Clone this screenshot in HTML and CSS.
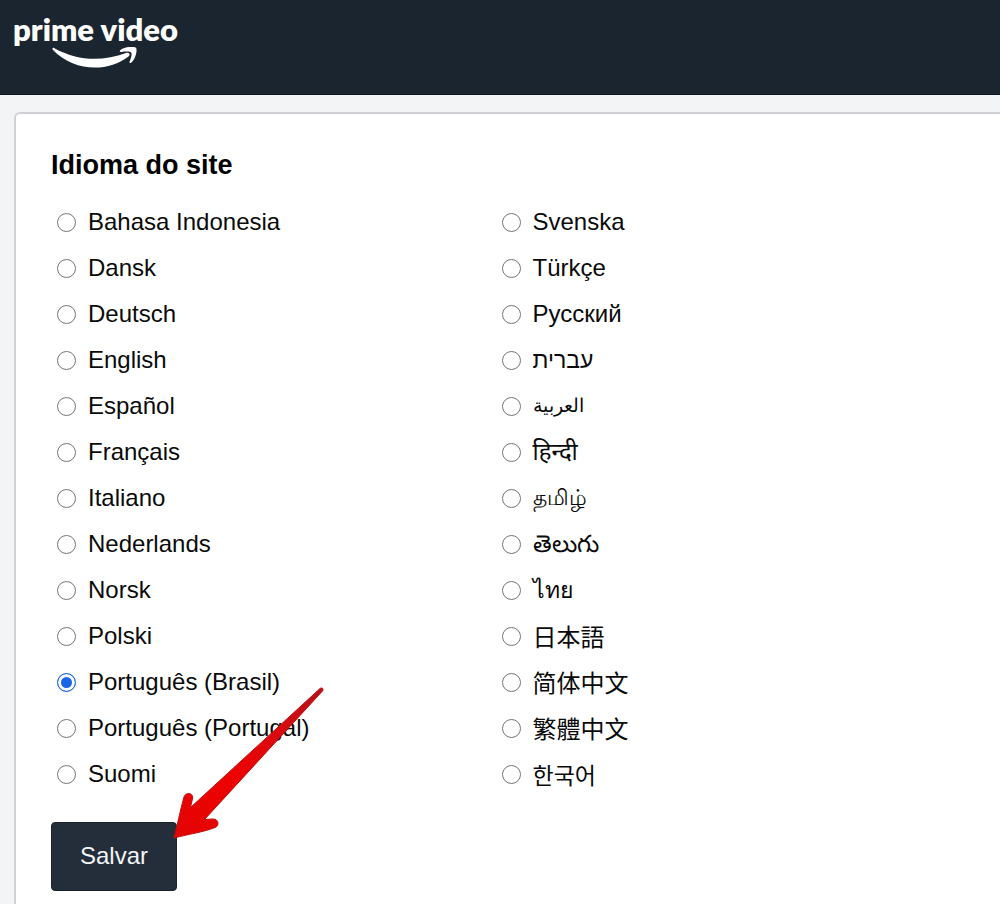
FILE: index.html
```
<!DOCTYPE html>
<html lang="pt-BR">
<head>
<meta charset="utf-8">
<meta name="viewport" content="width=device-width, initial-scale=1">
<title>Prime Video – Idioma do site</title>
<link rel="stylesheet" href="styles.css">
</head>
<body>
<header class="topbar">
  <a class="logo" href="#">
    <span class="logo-text">prime video</span>
    <svg class="logo-smile" viewBox="0 0 86 22" aria-hidden="true">
      <path d="M2 1C26 14.500 51 14.500 74 6C77 5 79 7.500 76.500 9.500C56 25.500 22 25 1 3C0 2 .6 .4 2 1Z"/>
      <path d="M68.500 3C72.500 -.4 82 -.8 84 .8C85.600 3 83.500 12 79.500 15.500C78.300 16.500 77 16 77.600 14.500C79.200 11 80.200 7 79.200 5.600C78 4.200 73 4.500 69.400 5C67.600 5.200 67.200 4.200 68.500 3Z"/>
    </svg>
  </a>
</header>
<main class="page">
  <form class="card">
    <fieldset class="languages">
      <legend class="title">Idioma do site</legend>
      <div class="columns">
        <div class="column">
          <label class="option"><input class="radio" type="radio" name="lang">Bahasa Indonesia</label>
          <label class="option"><input class="radio" type="radio" name="lang">Dansk</label>
          <label class="option"><input class="radio" type="radio" name="lang">Deutsch</label>
          <label class="option"><input class="radio" type="radio" name="lang">English</label>
          <label class="option"><input class="radio" type="radio" name="lang">Español</label>
          <label class="option"><input class="radio" type="radio" name="lang">Français</label>
          <label class="option"><input class="radio" type="radio" name="lang">Italiano</label>
          <label class="option"><input class="radio" type="radio" name="lang">Nederlands</label>
          <label class="option"><input class="radio" type="radio" name="lang">Norsk</label>
          <label class="option"><input class="radio" type="radio" name="lang">Polski</label>
          <label class="option"><input class="radio" type="radio" name="lang" checked>Português (Brasil)</label>
          <label class="option"><input class="radio" type="radio" name="lang">Português (Portugal)</label>
          <label class="option"><input class="radio" type="radio" name="lang">Suomi</label>
        </div>
        <div class="column">
          <label class="option"><input class="radio" type="radio" name="lang">Svenska</label>
          <label class="option"><input class="radio" type="radio" name="lang">Türkçe</label>
          <label class="option"><input class="radio" type="radio" name="lang">Русский</label>
          <label class="option"><input class="radio" type="radio" name="lang"><span class="hebrew" lang="he">עברית</span></label>
          <label class="option"><input class="radio" type="radio" name="lang"><span class="arabic" lang="ar">العربية</span></label>
          <label class="option"><input class="radio" type="radio" name="lang"><span lang="hi">हिन्दी</span></label>
          <label class="option"><input class="radio" type="radio" name="lang"><span class="tamil" lang="ta">தமிழ்</span></label>
          <label class="option"><input class="radio" type="radio" name="lang"><span lang="te">తెలుగు</span></label>
          <label class="option"><input class="radio" type="radio" name="lang"><span class="thai" lang="th">ไทย</span></label>
          <label class="option"><input class="radio" type="radio" name="lang"><span class="japanese" lang="ja">日本語</span></label>
          <label class="option"><input class="radio" type="radio" name="lang"><span class="simplified" lang="zh-Hans">简体中文</span></label>
          <label class="option"><input class="radio" type="radio" name="lang"><span class="traditional" lang="zh-Hant">繁體中文</span></label>
          <label class="option"><input class="radio" type="radio" name="lang"><span class="korean" lang="ko">한국어</span></label>
        </div>
      </div>
    </fieldset>
    <div class="actions">
      <button class="save" type="button">Salvar</button>
      <svg class="arrow" viewBox="0 0 160 160" aria-hidden="true">
        <defs>
          <linearGradient id="arrow-fill" x1="1" y1="0" x2="0" y2="1">
            <stop offset="0" stop-color="#b5121b"/>
            <stop offset=".3" stop-color="#d90b10"/>
            <stop offset=".6" stop-color="#ee0000"/>
            <stop offset="1" stop-color="#e30505"/>
          </linearGradient>
        </defs>
        <path d="M150 4.500C152 3 154 5 152.500 7L34.500 135.500L43 135C49 135 49.500 142 45 143.500C34 148 19 150 4 154C7 143 10 127 14 113C15.500 108 23 108.500 22.700 114L20.500 123.500Z" fill="url(#arrow-fill)" stroke="#c20d0d" stroke-width="1"/>
      </svg>
    </div>
  </form>
</main>
</body>
</html>
```
FILE: styles.css
```
* {
  box-sizing: border-box;
}

body {
  margin: 0;
  min-height: 100vh;
  background: #f3f4f6;
  color: #0a0a0a;
  font-family: "Liberation Sans", Arial, "Noto Sans", sans-serif;
  font-size: 24px;
  overflow-x: hidden;
}

.topbar {
  display: flex;
  height: 95px;
  padding: 11px 13px;
  background: #1b2530;
  border-bottom: 1px solid #10161e;
}

.logo {
  display: flex;
  flex-direction: column;
  align-items: center;
  align-self: flex-start;
  color: #fff;
  text-decoration: none;
}

.logo-text {
  font-family: Lato, "Open Sans", sans-serif;
  font-size: 31px;
  font-weight: 800;
  line-height: 36px;
}

.logo-smile {
  display: block;
  width: 86px;
  height: 22px;
  fill: currentColor;
}

.page {
  padding: 17px 0 0 14px;
}

.card {
  padding: 35px 60px 20px 35px;
  background: #fff;
  border: 2px solid #cfd1d5;
  border-right: 0;
  border-bottom: 0;
  border-radius: 6px 0 0 0;
}

.languages {
  min-width: 0;
  margin: 0;
  padding: 0;
  border: 0;
}

.title {
  padding: 0;
  color: #000;
  font-size: 27px;
  font-weight: 700;
  line-height: 32px;
}

.columns {
  display: grid;
  grid-template-columns: repeat(2, minmax(0, 1fr));
  padding-top: 18px;
}

.column {
  display: flex;
  flex-direction: column;
}

.option {
  display: flex;
  align-items: center;
  gap: 12px;
  height: 46px;
  padding-left: 6px;
  line-height: 32px;
}

.radio {
  appearance: none;
  flex: none;
  width: 19px;
  height: 19px;
  margin: 0;
  background: #fff;
  border: 1px solid #757575;
  border-radius: 50%;
}

.radio:checked {
  background: #1a66e8;
  border-color: #1a66e8;
  box-shadow: inset 0 0 0 3px #fff;
}

.hebrew,
.thai {
  font-size: 23px;
}

.arabic {
  font-size: 19px;
}

.tamil {
  font-size: 22px;
}

.japanese {
  font-family: "Noto Sans CJK JP", sans-serif;
}

.simplified {
  font-family: "Noto Sans CJK SC", sans-serif;
}

.traditional {
  font-family: "Noto Sans CJK TC", sans-serif;
}

.korean {
  font-family: "Noto Sans CJK KR", sans-serif;
  font-size: 23px;
}

.actions {
  position: relative;
  display: flex;
  padding-top: 25px;
}

.save {
  padding: 17px 28px 18px;
  background: #232e3a;
  border: 1px solid #1a232d;
  border-radius: 4px;
  color: #f3f4f6;
  font: inherit;
  line-height: 32px;
}

.arrow {
  position: absolute;
  top: -113px;
  left: 119px;
  width: 160px;
  height: 160px;
  pointer-events: none;
}
```
